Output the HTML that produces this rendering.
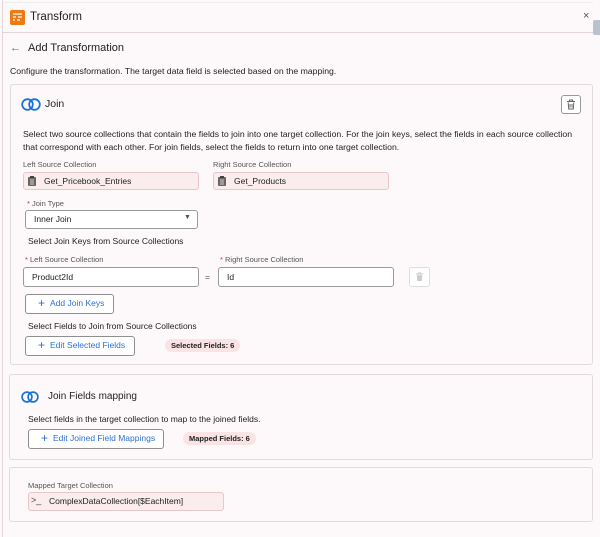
<!DOCTYPE html>
<html><head><style>
*{box-sizing:border-box;margin:0;padding:0}
body{width:600px;height:537px;background:#fdf9fa;font-family:"Liberation Sans",sans-serif;color:#222;position:relative;overflow:hidden;font-size:8.5px}
.a{position:absolute;white-space:nowrap}
.card{position:absolute;border:1px solid #e2dadc;border-radius:3px;background:#fdf9fa}
.inp{position:absolute;border:1px solid #e6c8cc;background:#fbeced;border-radius:3px;font-size:8.5px;padding-left:20px;line-height:17px}
.in2{position:absolute;border:1px solid #9a9a9a;background:#fff;border-radius:3px;font-size:8.5px;padding-left:8px;line-height:17px}
.btn{position:absolute;border:1px solid #8f8f8f;background:#fff;border-radius:3px;color:#2e6fd0;font-size:8.5px;line-height:17px;padding-left:12px}
.btn b{font-weight:normal;font-size:12px;margin-right:5px;vertical-align:-1px}
.badge{position:absolute;background:#f9e3e4;border-radius:8px;font-weight:bold;font-size:7.5px;padding:0 6px;line-height:13px}
.lbl{position:absolute;font-size:7.5px;color:#555;white-space:nowrap}
.lbl i{color:#c23934;font-style:normal}
</style></head><body>
<div class="a" style="left:2px;top:0;width:1px;height:537px;background:#e6d5d8"></div>
<div class="a" style="left:3px;top:32px;width:590px;height:1px;background:#e2d5d8"></div>
<div class="a" style="left:3px;top:2px;width:590px;height:1px;background:#eee"></div>
<div class="a" style="left:10px;top:10px;width:15px;height:15px;background:#ee7a14;border-radius:2px"></div>
<svg class="a" style="left:12px;top:12px" width="11" height="11" viewBox="0 0 11 11" fill="none" stroke="#fff" stroke-width="1.2"><path d="M1 2h9M1 5h3M6 5h4M1 8h2M5 8h3"/></svg>
<div class="a" style="left:30px;top:11px;font-size:11.5px">Transform</div>
<div class="a" style="left:583px;top:10px;font-size:11px;color:#555">×</div>
<div class="a" style="left:593px;top:20px;width:7px;height:15px;background:#b9c3cf;border-radius:2px 0 0 2px"></div>
<div class="a" style="left:10px;top:42px;font-size:11px;color:#666">←</div>
<div class="a" style="left:28px;top:42px;font-size:11px">Add Transformation</div>
<div class="a" style="left:10px;top:66px;font-size:8.7px">Configure the transformation. The target data field is selected based on the mapping.</div>

<div class="card" style="left:10px;top:84px;width:583px;height:281px"></div>
<svg class="a" style="left:21px;top:98px" width="20" height="13" viewBox="0 0 20 13" fill="none" stroke="#1b73d8" stroke-width="1.8"><circle cx="6.5" cy="6.5" r="5.3"/><circle cx="13.5" cy="6.5" r="5.3"/></svg>
<div class="a" style="left:45px;top:98px;font-size:10.5px">Join</div>
<div class="a" style="left:561px;top:95px;width:20px;height:19px;border:1px solid #999;border-radius:3px;background:#fff"></div>
<svg class="a" style="left:566px;top:99px" width="10" height="11" viewBox="0 0 10 11" fill="none" stroke="#666" stroke-width="1"><path d="M1 2.5h8M3.5 2.5V1h3v1.5M2.2 3.5l.5 6.5h4.6l.5-6.5M4 5v3.5M6 5v3.5"/></svg>
<div class="a" style="left:23px;top:128px;line-height:13px;font-size:8.7px">Select two source collections that contain the fields to join into one target collection. For the join keys, select the fields in each source collection<br>that correspond with each other. For join fields, select the fields to return into one target collection.</div>
<div class="lbl" style="left:23px;top:160px">Left Source Collection</div>
<div class="lbl" style="left:213px;top:160px">Right Source Collection</div>
<div class="inp" style="left:23px;top:172px;width:176px;height:18px">Get_Pricebook_Entries</div>
<div class="inp" style="left:213px;top:172px;width:176px;height:18px">Get_Products</div>
<svg class="a" style="left:28px;top:176px" width="8" height="10" viewBox="0 0 8 10" fill="#666"><rect x="0" y="1" width="8" height="9" rx="1"/><rect x="2" y="0" width="4" height="2" fill="#444"/><path d="M2 4h4M2 6h4M2 8h4" stroke="#fbeced" stroke-width=".8"/></svg>
<svg class="a" style="left:218px;top:176px" width="8" height="10" viewBox="0 0 8 10" fill="#666"><rect x="0" y="1" width="8" height="9" rx="1"/><rect x="2" y="0" width="4" height="2" fill="#444"/><path d="M2 4h4M2 6h4M2 8h4" stroke="#fbeced" stroke-width=".8"/></svg>
<div class="lbl" style="left:27px;top:199px"><i>*</i> Join Type</div>
<div class="in2" style="left:25px;top:210px;width:173px;height:19px">Inner Join</div>
<div class="a" style="left:184px;top:214px;font-size:7px;color:#555">▼</div>
<div class="a" style="left:28px;top:236px">Select Join Keys from Source Collections</div>
<div class="lbl" style="left:25px;top:255px"><i>*</i> Left Source Collection</div>
<div class="lbl" style="left:220px;top:255px"><i>*</i> Right Source Collection</div>
<div class="in2" style="left:23px;top:267px;width:176px;height:20px;line-height:18px">Product2Id</div>
<div class="a" style="left:205px;top:272px;color:#555">=</div>
<div class="in2" style="left:218px;top:267px;width:176px;height:20px;line-height:18px">Id</div>
<div class="a" style="left:409px;top:267px;width:21px;height:20px;border:1px solid #ddd;border-radius:3px;background:#fff"></div>
<svg class="a" style="left:415px;top:272px" width="9" height="10" viewBox="0 0 10 11" fill="#ccc"><rect x="1" y="1.5" width="8" height="1.2"/><rect x="3.5" y="0.3" width="3" height="1.2"/><path d="M2 3.5h6l-.5 6.5h-5z"/></svg>
<div class="btn" style="left:25px;top:294px;width:89px;height:20px"><b>+</b>Add Join Keys</div>
<div class="a" style="left:28px;top:321px">Select Fields to Join from Source Collections</div>
<div class="btn" style="left:25px;top:336px;width:110px;height:20px"><b>+</b>Edit Selected Fields</div>
<div class="badge" style="left:165px;top:339px">Selected Fields: 6</div>

<div class="card" style="left:9px;top:374px;width:584px;height:86px"></div>
<svg class="a" style="left:21px;top:391px" width="18" height="12" viewBox="0 0 18 12" fill="none" stroke="#1b73d8" stroke-width="1.7"><circle cx="6" cy="6" r="4.9"/><circle cx="12" cy="6" r="4.9"/></svg>
<div class="a" style="left:48px;top:391px;font-size:10px">Join Fields mapping</div>
<div class="a" style="left:28px;top:414px">Select fields in the target collection to map to the joined fields.</div>
<div class="btn" style="left:28px;top:429px;width:136px;height:20px"><b>+</b>Edit Joined Field Mappings</div>
<div class="badge" style="left:183px;top:432px">Mapped Fields: 6</div>

<div class="card" style="left:9px;top:467px;width:584px;height:55px"></div>
<div class="lbl" style="left:28px;top:481px">Mapped Target Collection</div>
<div class="inp" style="left:28px;top:492px;width:196px;height:19px;padding-left:20px">ComplexDataCollection[$EachItem]</div>
<div class="a" style="left:31px;top:495px;font-size:9px;color:#444">&gt;_</div>
</body></html>
